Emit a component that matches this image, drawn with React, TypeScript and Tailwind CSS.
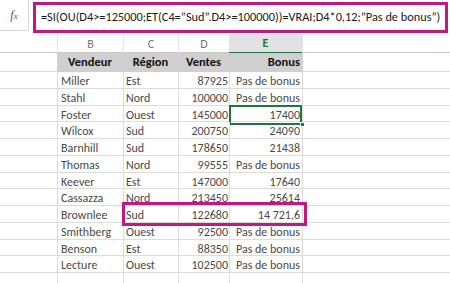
import React from "react";

const rows: [string, string, string, string][] = [
  ["Miller", "Est", "87925", "Pas de bonus"],
  ["Stahl", "Nord", "100000", "Pas de bonus"],
  ["Foster", "Ouest", "145000", "17400"],
  ["Wilcox", "Sud", "200750", "24090"],
  ["Barnhill", "Sud", "178650", "21438"],
  ["Thomas", "Nord", "99555", "Pas de bonus"],
  ["Keever", "Est", "147000", "17640"],
  ["Cassazza", "Nord", "213450", "25614"],
  ["Brownlee", "Sud", "122680", "14 721,6"],
  ["Smithberg", "Ouest", "92500", "Pas de bonus"],
  ["Benson", "Est", "88350", "Pas de bonus"],
  ["Lecture", "Ouest", "102500", "Pas de bonus"],
  ["", "", "", ""],
];

const cols = "grid grid-cols-[57px_66px_55px_51px_73px_1fr]";

export default function App() {
  return (
    <div className="relative w-[450px] h-[283px] overflow-hidden bg-white font-['Carlito','Lato',sans-serif] text-[#4a4a4a]">
      {/* formula bar */}
      <div className="flex h-[34px] items-start">
        <div className="flex h-[31px] w-[29px] items-center justify-center border-r border-b border-[#d6d6d6] font-['Liberation_Serif',serif] italic text-[12px] text-[#555]">
          f<span className="text-[9px] mt-[3px]">x</span>
        </div>
        <div className="ml-[4px] mt-[2px] flex h-[31px] w-[415px] items-center border-[3px] border-[#c0197f] pl-[5px] text-[12.3px] text-[#1a1a1a] whitespace-nowrap">
          =SI(OU(D4&gt;=125000;ET(C4=”Sud”.D4&gt;=100000))=VRAI;D4*0,12;”Pas de bonus”)
        </div>
      </div>
      {/* column headers */}
      <div className={`${cols} h-[19px] border-b border-[#c8c8c8] text-[12px] text-[#777]`}>
        <div />
        <div className="flex items-center justify-center border-l border-[#e3e3e3]">B</div>
        <div className="flex items-center justify-center border-l border-[#e3e3e3]">C</div>
        <div className="flex items-center justify-center border-l border-[#e3e3e3]">D</div>
        <div className="flex items-center justify-center border-b-2 border-[#217346] bg-[#e2e2e2] font-bold text-[#217346]">E</div>
        <div className="border-l border-[#e3e3e3]" />
      </div>
      {/* header row */}
      <div className={`${cols} h-[19px] border-b border-[#d8d8d8] text-[12.5px] font-bold text-[#111]`}>
        <div />
        <div className="flex items-center justify-center bg-[#cfcfcf]">Vendeur</div>
        <div className="flex items-center justify-center bg-[#cfcfcf]">Région</div>
        <div className="flex items-center justify-center bg-[#cfcfcf]">Ventes</div>
        <div className="flex items-center justify-end bg-[#cfcfcf] pr-[2px]">Bonus</div>
        <div className="border-l border-[#d8d8d8]" />
      </div>
      {/* data */}
      {rows.map((r, i) => (
        <div key={i} className={`${cols} h-[16.75px] border-b border-[#dcdcdc] text-[12px] whitespace-nowrap`}>
          <div />
          <div className="flex items-center border-l border-[#dcdcdc] pl-[3px]">{r[0]}</div>
          <div className="flex items-center border-l border-[#dcdcdc] pl-[2px]">{r[1]}</div>
          <div className="flex items-center justify-end border-l border-[#dcdcdc] pr-[1px]">{r[2]}</div>
          <div className="relative flex items-center justify-end border-l border-[#dcdcdc] pr-[2px]">
            {r[3]}
            {i === 2 && (
              <>
                <div className="absolute -left-[1px] -top-[1px] right-0 -bottom-[1px] border-2 border-[#217346]" />
                <div className="absolute -right-[3px] -bottom-[3px] h-[5px] w-[5px] bg-[#217346] border border-white" />
              </>
            )}
          </div>
          <div className="border-l border-[#dcdcdc]" />
        </div>
      ))}
      {/* highlight */}
      <div className="absolute left-[122px] top-[202px] h-[24px] w-[185px] border-[3px] border-[#c0197f]" />
    </div>
  );
}
